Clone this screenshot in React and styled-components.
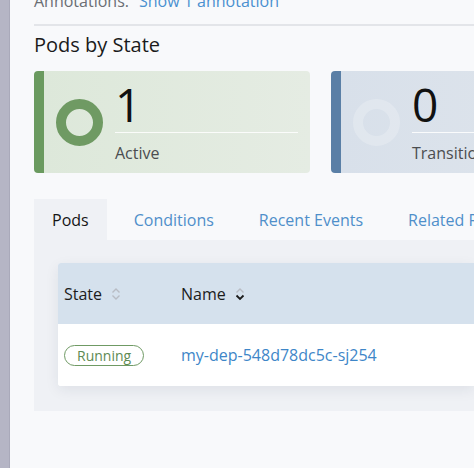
import styled, { createGlobalStyle } from 'styled-components';

const GlobalStyle = createGlobalStyle`
  html, body {
    margin: 0;
    padding: 0;
    background: #f8f9fb;
    font-family: "Open Sans", "Noto Sans", sans-serif;
    overflow: hidden;
  }
`;

const Shell = styled.div`
  display: flex;
  width: 474px;
  height: 468px;
  overflow: hidden;
`;

const SideStripe = styled.div`
  width: 9px;
  flex-shrink: 0;
  background: #b5b5c5;
  border-right: 1px solid #a9a9ba;
`;

const Main = styled.div`
  flex: 1;
  min-width: 0;
  padding-left: 24px;
  overflow: hidden;
`;

const AnnotationRow = styled.div`
  margin-top: -9px;
  height: 20px;
  font-size: 16px;
  line-height: 20px;
  color: #6a6e73;
  white-space: nowrap;
  span {
    color: #4a90d0;
    margin-left: 10px;
  }
`;

const Divider = styled.div`
  margin-top: 13px;
  border-top: 2px solid #e3e5e9;
`;

const Heading = styled.h2`
  margin: 6px 0 0;
  font-size: 20px;
  font-weight: 500;
  line-height: 26px;
  color: #1b1b1b;
`;

const CardRow = styled.div`
  display: flex;
  gap: 21px;
  margin-top: 13px;
`;

const Card = styled.div`
  width: 276px;
  height: 102px;
  flex-shrink: 0;
  display: flex;
  align-items: center;
  box-sizing: border-box;
  border-radius: 4px;
  border-left: 10px solid ${(p) => p.$accent};
  background: ${(p) => p.$bg};
  padding: 0 12px;
  gap: 12px;
`;

const Donut = styled.div`
  width: 47px;
  height: 47px;
  border-radius: 50%;
  box-sizing: border-box;
  border: 10px solid ${(p) => p.$color};
  flex-shrink: 0;
`;

const CardBody = styled.div`
  flex: 1;
  display: flex;
  flex-direction: column;
`;

const Count = styled.div`
  font-size: 46px;
  line-height: 46px;
  height: 45px;
  color: #111;
  border-bottom: 1.5px solid rgba(255, 255, 255, 0.85);
  padding-bottom: 6px;
`;

const CardLabel = styled.div`
  font-size: 16px;
  margin-top: 9px;
  color: #4b4d50;
  white-space: nowrap;
`;

const Tabs = styled.div`
  display: flex;
  gap: 9px;
  margin-top: 26px;
`;

const Tab = styled.div`
  height: 41px;
  display: flex;
  align-items: center;
  padding: 0 18px;
  font-size: 16px;
  white-space: nowrap;
  flex-shrink: 0;
  color: ${(p) => (p.$active ? '#151515' : '#4f8fca')};
  background: ${(p) => (p.$active ? '#eff1f5' : 'transparent')};
`;

const Panel = styled.div`
  background: #eff1f5;
  padding: 23px 0 25px 24px;
`;

const Table = styled.div`
  background: #fff;
  border-radius: 3px 0 0 3px;
  box-shadow: 0 4px 14px rgba(30, 40, 60, 0.08);
  overflow: hidden;
`;

const Row = styled.div`
  display: grid;
  grid-template-columns: 117px 1fr;
  align-items: center;
  height: ${(p) => (p.$head ? 61 : 62)}px;
  background: ${(p) => (p.$head ? '#d5e1ed' : '#fff')};
  padding-left: 6px;
`;

const HeadCell = styled.div`
  display: flex;
  align-items: center;
  gap: 9px;
  font-size: 16px;
  font-weight: 500;
  color: #1c1c1c;
`;

const Badge = styled.span`
  justify-self: start;
  display: inline-block;
  font-size: 14px;
  line-height: 19px;
  padding: 0 12px;
  border: 1px solid #6f9a64;
  border-radius: 12px;
  color: #5e8a53;
`;

const PodLink = styled.span`
  font-size: 16px;
  color: #3e86c8;
`;

function SortIcon({ active }) {
  return (
    <svg width="10" height="14" viewBox="0 0 10 14" fill="none">
      <path d="M1.5 5.5 L5 2 L8.5 5.5" stroke="#b8bcc4" strokeWidth="1.4" />
      <path
        d="M1.5 8.5 L5 12 L8.5 8.5"
        stroke={active ? '#1c1c1c' : '#b8bcc4'}
        strokeWidth={active ? 1.8 : 1.4}
      />
    </svg>
  );
}

export default function App() {
  return (
    <>
      <GlobalStyle />
      <Shell>
        <SideStripe />
        <Main>
          <AnnotationRow>
            Annotations:<span>Show 1 annotation</span>
          </AnnotationRow>
          <Divider />
          <Heading>Pods by State</Heading>
          <CardRow>
            <Card $accent="#6a9a5f" $bg="linear-gradient(90deg, #dde8da, #e5ece3)">
              <Donut $color="#6f9a63" />
              <CardBody>
                <Count>1</Count>
                <CardLabel>Active</CardLabel>
              </CardBody>
            </Card>
            <Card $accent="#5a7fa6" $bg="linear-gradient(90deg, #d8e0ea, #dfe5ec)">
              <Donut $color="rgba(255,255,255,0.22)" />
              <CardBody>
                <Count>0</Count>
                <CardLabel>Transitioning</CardLabel>
              </CardBody>
            </Card>
          </CardRow>
          <Tabs>
            <Tab $active>Pods</Tab>
            <Tab>Conditions</Tab>
            <Tab>Recent Events</Tab>
            <Tab>Related Resources</Tab>
          </Tabs>
          <Panel>
            <Table>
              <Row $head>
                <HeadCell>
                  State <SortIcon />
                </HeadCell>
                <HeadCell>
                  Name <SortIcon active />
                </HeadCell>
              </Row>
              <Row>
                <Badge>Running</Badge>
                <PodLink>my-dep-548d78dc5c-sj254</PodLink>
              </Row>
            </Table>
          </Panel>
        </Main>
      </Shell>
    </>
  );
}
